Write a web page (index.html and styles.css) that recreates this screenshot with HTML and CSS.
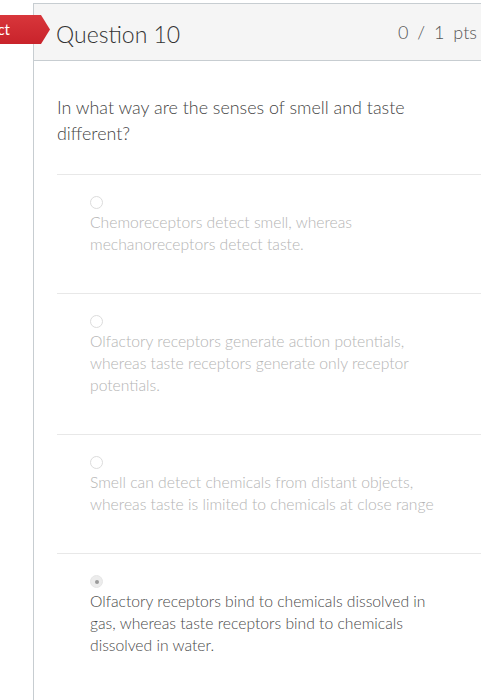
FILE: index.html
```html
<!DOCTYPE html>
<html lang="en">
<head>
<meta charset="utf-8">
<title>Question 10</title>
<link rel="stylesheet" href="styles.css">
</head>
<body>
<div class="page">
  <div class="tag">Incorrect</div>
  <div class="card">
    <div class="header">
      <span class="title">Question 10</span>
      <span class="pts">0 / 1 pts</span>
    </div>
    <div class="body">
      <p class="qtext">In what way are the senses of smell and taste different?</p>
      <div class="answers">
        <div class="answer">
          <span class="radio"></span>
          <p class="atext">Chemoreceptors detect smell, whereas mechanoreceptors detect taste.</p>
        </div>
        <div class="answer">
          <span class="radio"></span>
          <p class="atext">Olfactory receptors generate action potentials, whereas taste receptors generate only receptor potentials.</p>
        </div>
        <div class="answer">
          <span class="radio"></span>
          <p class="atext">Smell can detect chemicals from distant objects, whereas taste is limited to chemicals at close range</p>
        </div>
        <div class="answer selected">
          <span class="radio"></span>
          <p class="atext">Olfactory receptors bind to chemicals dissolved in gas, whereas taste receptors bind to chemicals dissolved in water.</p>
        </div>
      </div>
    </div>
  </div>
</div>
</body>
</html>
```

FILE: styles.css
```css
html, body {
  margin: 0;
  padding: 0;
  background: #ffffff;
  overflow: hidden;
}

body {
  font-family: Lato, "Open Sans", "Liberation Sans", sans-serif;
  color: #444;
}

.page {
  position: relative;
  box-sizing: border-box;
  height: 700px;
  padding-top: 3px;
  padding-left: 33px;
  display: flex;
  flex-direction: column;
}

.tag {
  position: absolute;
  top: 15px;
  left: -60px;
  width: 110px;
  height: 29px;
  box-sizing: border-box;
  padding-right: 40px;
  background: linear-gradient(#d8363b, #c9232b);
  color: #fff;
  font-size: 15px;
  line-height: 29px;
  text-align: right;
  clip-path: polygon(0 0, 101px 0, 110px 50%, 101px 100%, 0 100%);
  z-index: 2;
}

.card {
  flex: 1;
  border: 1px solid #c7cdd1;
  border-right: none;
  border-bottom: none;
  margin-right: -4px;
  background: #fff;
}

.header {
  display: flex;
  justify-content: space-between;
  align-items: center;
  height: 56px;
  padding: 0 8px 0 22px;
  background: #f5f5f5;
  border-bottom: 1px solid #c7cdd1;
}

.title {
  font-size: 23px;
  font-weight: 300;
  color: #333;
  padding-top: 3px;
}

.pts {
  font-size: 18px;
  font-weight: 300;
  word-spacing: 4px;
  color: #555;
}

.body {
  padding: 33px 0 0 23px;
}

.qtext {
  margin: 0;
  font-size: 17.9px;
  font-weight: 300;
  line-height: 26px;
  color: #444;
  max-width: 378px;
}

.answers {
  margin-top: 28px;
}

.answer {
  display: flex;
  flex-direction: column;
  align-items: flex-start;
  gap: 2px;
  border-top: 1px solid #e8e8e8;
  padding: 21px 0 38px 33px;
}

.radio {
  width: 11px;
  height: 11px;
  border: 1px solid #dcdcdc;
  border-radius: 50%;
  background: #fff;
  position: relative;
}

.atext {
  margin: 0;
  font-size: 15.7px;
  font-weight: 300;
  line-height: 22px;
  color: #b4b4b4;
  max-width: 354px;
}

.selected .radio {
  background: #ececec;
  border-color: #e6e6e6;
}

.selected .radio::after {
  content: "";
  position: absolute;
  top: 3.5px;
  left: 3.5px;
  width: 4px;
  height: 4px;
  border-radius: 50%;
  background: #9a9a9a;
}

.selected .atext {
  color: #4a4a4a;
}
```
